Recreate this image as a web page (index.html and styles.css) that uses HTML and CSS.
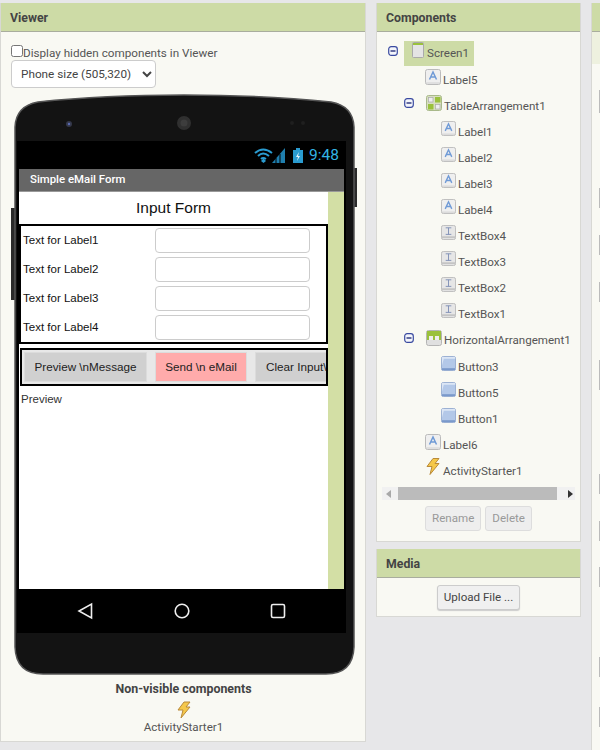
FILE: index.html
```html
<!DOCTYPE html>
<html lang="en">
<head>
    <meta charset="UTF-8">
    <title>Designer</title>
    <link rel="stylesheet" href="styles.css">
</head>
<body>

<svg class="defs">
    <symbol id="bolt" viewBox="0 0 16 18">
        <path d="M8 1 L14 1 L10 6 L14 6 L5 17 L7 9 L2 9 Z" fill="#f5c84a" stroke="#b98a3a" stroke-width="1"/>
    </symbol>
    <symbol id="ico-text" viewBox="0 0 16 16">
        <rect x="0.5" y="0.5" width="15" height="15" rx="2" fill="#e6e6e6" stroke="#bbb"/>
        <path d="M5 3 H11 M8 3 V10 M5 10 H11" fill="none" stroke="#7f8fb5" stroke-width="1"/>
        <path d="M1 13 H15" stroke="#c4c4c4" stroke-width="2"/>
    </symbol>
    <symbol id="ico-button" viewBox="0 0 16 16">
        <rect x="0.5" y="0.5" width="15" height="15" rx="2" fill="#b3c8e8" stroke="#95acd0"/>
        <path d="M1 1 H15 V3 L3 3 L1 10 Z" fill="#dce6f5"/>
        <path d="M1 14 H15" stroke="#7a99cb" stroke-width="2"/>
    </symbol>
    <symbol id="ico-label" viewBox="0 0 16 16">
        <rect x="0.5" y="0.5" width="15" height="15" rx="2" fill="#efefef" stroke="#bbb"/>
        <path d="M4.5 10.5 L8 3 L11.5 10.5 M5.5 8 H10.5" fill="none" stroke="#6f9ad6" stroke-width="1.5"/>
        <path d="M1 14 H15" stroke="#d0d0d0" stroke-width="1"/>
    </symbol>
    <symbol id="minus" viewBox="0 0 10 10">
        <rect x="0.7" y="0.7" width="8.6" height="8.6" rx="2.5" fill="#f4f6fb" stroke="#3a4aa0" stroke-width="1.2"/>
        <path d="M2.5 5 H7.5" stroke="#27327a" stroke-width="1.4"/>
    </symbol>
</svg>

<div class="panel viewer">
    <div class="panel-head">Viewer</div>
    <div class="viewer-body">
        <label class="hidden-check"><input type="checkbox">Display hidden components in Viewer</label>
        <select class="size-select">
            <option>Phone size (505,320)</option>
        </select>

        <div class="phone">
            <svg class="phone-shell" width="341" height="580" viewBox="0 0 341 580">
                <rect x="-3" y="113" width="4" height="92" fill="#2a2a2a"/>
                <rect x="340" y="73" width="3" height="39" fill="#2a2a2a"/>
                <path d="M1 32 Q2 11 24 7 Q90 0 170 0 Q250 0 317 7 Q339 11 340 32 V552 Q339 579 312 579 H29 Q2 579 1 552 Z" fill="#131313" stroke="#555" stroke-width="1.5"/>
                <circle cx="55" cy="29" r="3" fill="#34384a"/>
                <circle cx="55" cy="29" r="1.2" fill="#5a6ab0"/>
                <circle cx="170" cy="28" r="7" fill="#303030"/>
                <circle cx="170" cy="28" r="3.5" fill="#3d3d3d"/>
                <circle cx="278" cy="28" r="2" fill="#1f1f1f"/>
                <circle cx="289" cy="28" r="2" fill="#1f1f1f"/>
            </svg>

            <div class="screen">
                <div class="status-bar">
                    <svg class="status-icons" width="50" height="17" viewBox="0 0 50 17">
                        <path d="M2 6 Q10 -1 19 6 M5 9 Q10 4 16 9 M8 12 Q10 10 13 12" fill="none" stroke="#2a9bd0" stroke-width="2"/>
                        <path d="M8 14 L10.5 11.5 L13 14 L10.5 16 Z" fill="#2a9bd0"/>
                        <path d="M19 16 L32 1 V16 Z" fill="#1f7fae"/>
                        <path d="M23 16 V11 M27 16 V7" stroke="#000" stroke-width="1"/>
                        <rect x="40" y="3" width="10" height="13" fill="#2a9bd0"/>
                        <rect x="43" y="1" width="4" height="2" fill="#2a9bd0"/>
                        <path d="M46 5 L43 10 H45 L44 14 L47 9 H45 Z" fill="#e8f6fc"/>
                    </svg>
                    <span class="clock">9:48</span>
                </div>
                <div class="title-bar">Simple eMail Form</div>
                <div class="form-wrap">
                    <div class="form">
                        <div class="form-title">Input Form</div>
                        <div class="table-box">
                            <div class="table-row"><span>Text for Label1</span><input class="text-box" type="text"></div>
                            <div class="table-row"><span>Text for Label2</span><input class="text-box" type="text"></div>
                            <div class="table-row"><span>Text for Label3</span><input class="text-box" type="text"></div>
                            <div class="table-row"><span>Text for Label4</span><input class="text-box" type="text"></div>
                        </div>
                        <div class="button-box">
                            <div class="form-btn btn-preview">Preview \nMessage</div>
                            <div class="form-btn btn-send">Send \n eMail</div>
                            <div class="form-btn btn-clear">Clear Input\n</div>
                        </div>
                        <div class="preview">Preview</div>
                    </div>
                    <div class="form-strip"></div>
                </div>
                <div class="nav-bar">
                    <svg width="16" height="18" viewBox="0 0 16 18"><path d="M14.5 2 V16 L2 9 Z" fill="none" stroke="#eee" stroke-width="1.6"/></svg>
                    <svg width="16" height="16" viewBox="0 0 16 16"><circle cx="8" cy="8" r="6.8" fill="none" stroke="#eee" stroke-width="1.6"/></svg>
                    <svg width="16" height="16" viewBox="0 0 16 16"><rect x="1.5" y="1.5" width="13" height="13" rx="1.5" fill="none" stroke="#eee" stroke-width="1.6"/></svg>
                </div>
            </div>
        </div>

        <div class="non-visible">
            <div class="non-visible-title">Non-visible components</div>
            <svg class="non-visible-icon" width="16" height="18"><use href="#bolt"/></svg>
            <div>ActivityStarter1</div>
        </div>
    </div>
</div>

<div class="side-column">
    <div class="panel components">
        <div class="panel-head">Components</div>
        <div class="tree">
            <div class="tree-row depth-0">
                <svg class="toggle" width="10" height="10"><use href="#minus"/></svg>
                <div class="tree-selected">
                    <svg class="screen-icon" width="12" height="16" viewBox="0 0 12 16">
                        <rect x="0.5" y="0.5" width="11" height="15" rx="1" fill="#e4e4e4" stroke="#aaa"/>
                        <rect x="1" y="1" width="10" height="2" fill="#9ac13c"/>
                    </svg>
                    <span>Screen1</span>
                </div>
            </div>
            <div class="tree-row depth-1"><svg class="tree-icon"><use href="#ico-label"/></svg><span>Label5</span></div>
            <div class="tree-row depth-1">
                <svg class="toggle" width="10" height="10"><use href="#minus"/></svg>
                <svg class="tree-icon" viewBox="0 0 16 16">
                    <rect x="0.5" y="0.5" width="15" height="15" rx="2" fill="#d8dfc0" stroke="#a9b98a"/>
                    <rect x="2.5" y="2.5" width="4.5" height="4.5" fill="#eee" stroke="#aaa" stroke-width="0.7"/>
                    <rect x="9" y="2" width="5.5" height="5.5" fill="#9ac13c"/>
                    <rect x="2" y="9" width="5.5" height="5.5" fill="#9ac13c"/>
                    <rect x="9.5" y="9.5" width="4.5" height="4.5" fill="#eee" stroke="#aaa" stroke-width="0.7"/>
                </svg>
                <span>TableArrangement1</span>
            </div>
            <div class="tree-row depth-2"><svg class="tree-icon"><use href="#ico-label"/></svg><span>Label1</span></div>
            <div class="tree-row depth-2"><svg class="tree-icon"><use href="#ico-label"/></svg><span>Label2</span></div>
            <div class="tree-row depth-2"><svg class="tree-icon"><use href="#ico-label"/></svg><span>Label3</span></div>
            <div class="tree-row depth-2"><svg class="tree-icon"><use href="#ico-label"/></svg><span>Label4</span></div>
            <div class="tree-row depth-2"><svg class="tree-icon"><use href="#ico-text"/></svg><span>TextBox4</span></div>
            <div class="tree-row depth-2"><svg class="tree-icon"><use href="#ico-text"/></svg><span>TextBox3</span></div>
            <div class="tree-row depth-2"><svg class="tree-icon"><use href="#ico-text"/></svg><span>TextBox2</span></div>
            <div class="tree-row depth-2"><svg class="tree-icon"><use href="#ico-text"/></svg><span>TextBox1</span></div>
            <div class="tree-row depth-1 row-horizontal">
                <svg class="toggle" width="10" height="10"><use href="#minus"/></svg>
                <svg class="tree-icon" viewBox="0 0 16 16">
                    <rect x="0.5" y="0.5" width="15" height="15" rx="2" fill="#e0e0e0" stroke="#b5b5b5"/>
                    <path d="M1 1 H15 V10 H1 Z" fill="#9ac13c"/>
                    <rect x="3" y="6" width="4" height="4" fill="#eee"/>
                    <rect x="9" y="6" width="4" height="4" fill="#eee"/>
                </svg>
                <span>HorizontalArrangement1</span>
            </div>
            <div class="tree-row depth-2"><svg class="tree-icon"><use href="#ico-button"/></svg><span>Button3</span></div>
            <div class="tree-row depth-2"><svg class="tree-icon"><use href="#ico-button"/></svg><span>Button5</span></div>
            <div class="tree-row depth-2"><svg class="tree-icon"><use href="#ico-button"/></svg><span>Button1</span></div>
            <div class="tree-row depth-1"><svg class="tree-icon"><use href="#ico-label"/></svg><span>Label6</span></div>
            <div class="tree-row depth-1"><svg class="tree-icon icon-bolt"><use href="#bolt"/></svg><span>ActivityStarter1</span></div>
        </div>
        <div class="h-scroll">
            <span class="arrow arrow-left"></span>
            <div class="h-thumb"></div>
            <span class="arrow arrow-right"></span>
        </div>
        <div class="tree-buttons">
            <div class="soft-btn disabled">Rename</div>
            <div class="soft-btn disabled">Delete</div>
        </div>
    </div>

    <div class="panel media">
        <div class="panel-head">Media</div>
        <div class="media-body">
            <div class="soft-btn">Upload File ...</div>
        </div>
    </div>
</div>

<div class="panel properties">
    <div class="panel-head"></div>
    <div class="properties-band"></div>
    <div class="properties-marks">
        <i></i><i></i><i></i><i></i><i></i><i></i><i></i><i></i><i></i><i></i>
    </div>
</div>

</body>
</html>
```

FILE: styles.css
```css
html, body {
    height: 100%;
    margin: 0;
    padding: 0;
}

body {
    display: flex;
    align-items: flex-start;
    gap: 10px;
    box-sizing: border-box;
    height: 750px;
    padding-top: 3px;
    overflow: hidden;
    background-color: #e7e7e9;
    font-family: 'Roboto', sans-serif;
    font-size: 12px;
    color: #444;
}

.defs {
    display: none;
}

.panel {
    box-sizing: border-box;
    background-color: #f9f9f3;
    border-right: 1px solid #d8d8d4;
    border-bottom: 1px solid #d8d8d4;
}

.panel-head {
    box-sizing: border-box;
    height: 29px;
    line-height: 30px;
    padding-left: 9px;
    background-color: #cddba6;
    border-bottom: 1px solid #a9ad9e;
    font-weight: bold;
    font-size: 12.3px;
    color: #444;
}

/* Viewer */

.viewer {
    width: 367px;
    height: 739px;
    border-left: 1px solid #d8d8d4;
}

.viewer-body {
    padding: 10px 0 0 10px;
}

.hidden-check {
    display: flex;
    align-items: center;
    height: 18px;
    padding-top: 3px;
    box-sizing: border-box;
    font-size: 11.7px;
    color: #555;
}

.hidden-check input {
    width: 12px;
    height: 12px;
    margin: -3px 0 0 0;
}

.size-select {
    display: block;
    box-sizing: border-box;
    width: 145px;
    height: 28px;
    padding-left: 5px;
    background-color: #fff;
    border: 1px solid #ccc;
    border-radius: 4px;
    font-family: 'Roboto', sans-serif;
    font-size: 11.75px;
    color: #444;
}

.phone {
    position: relative;
    box-sizing: border-box;
    width: 341px;
    height: 580px;
    margin: 7px 0 0 3px;
    padding: 46px 0 0 3px;
}

.phone-shell {
    position: absolute;
    top: 0;
    left: 0;
    overflow: visible;
}

.screen {
    position: relative;
    width: 329px;
    height: 492px;
    background-color: #000;
}

.status-bar {
    display: flex;
    align-items: center;
    justify-content: flex-end;
    gap: 6px;
    height: 28px;
    padding-right: 7px;
    box-sizing: border-box;
}

.clock {
    font-size: 15.5px;
    color: #33b5e5;
}

.title-bar {
    box-sizing: border-box;
    height: 23px;
    line-height: 21px;
    margin: 0 2px;
    padding-left: 11px;
    background-color: #666;
    border-bottom: 1px solid #999;
    font-weight: 500;
    font-size: 11.4px;
    color: #fff;
}

.form-wrap {
    display: flex;
    height: 397px;
    margin: 0 2px;
    font-family: 'Liberation Sans', sans-serif;
    color: #111;
}

.form {
    width: 309px;
    background-color: #fff;
}

.form-strip {
    width: 16px;
    background-color: #d3dfa5;
}

.form-title {
    height: 32px;
    line-height: 32px;
    text-align: center;
    font-size: 15.5px;
}

.table-box {
    box-sizing: border-box;
    height: 120px;
    padding-left: 2px;
    border: 2px solid #000;
}

.table-row {
    display: flex;
    align-items: center;
    height: 29px;
    font-size: 11.5px;
}

.table-row span {
    width: 132px;
    margin-top: -2px;
}

.text-box {
    box-sizing: border-box;
    width: 155px;
    height: 25px;
    background-color: #fff;
    border: 1px solid #ccc;
    border-radius: 4px;
}

.button-box {
    display: flex;
    gap: 8px;
    box-sizing: border-box;
    height: 38px;
    margin: 4px 0 0 1px;
    padding: 2px 0 2px 2px;
    border: 2px solid #000;
    overflow: hidden;
    background-color: #e8e8e8;
}

.form-btn {
    flex: none;
    box-sizing: border-box;
    height: 30px;
    line-height: 28px;
    text-align: center;
    border: 1px solid #dcdcdc;
    background-color: #d0d0d0;
    font-size: 11.7px;
    color: #222;
}

.btn-preview {
    width: 123px;
}

.btn-send {
    width: 92px;
    background-color: #ffabab;
}

.btn-clear {
    width: 90px;
    text-align: left;
    padding-left: 10px;
}

.preview {
    margin: 7px 0 0 2px;
    font-size: 11.5px;
    color: #333;
}

.nav-bar {
    display: flex;
    align-items: center;
    justify-content: space-between;
    height: 44px;
    padding: 0 60px;
}

.non-visible {
    display: flex;
    flex-direction: column;
    align-items: center;
    width: 345px;
    margin-top: 6px;
    font-size: 11.6px;
    color: #555;
}

.non-visible-title {
    font-weight: bold;
    font-size: 12.4px;
    color: #444;
}

.non-visible-icon {
    margin: 5px 0 1px;
}

/* Components */

.side-column {
    display: flex;
    flex-direction: column;
    gap: 7px;
    width: 205px;
    flex: none;
}

.components {
    height: 539px;
    border-left: 1px solid #d8d8d4;
}

.tree {
    padding-top: 8px;
    font-size: 11.6px;
    color: #555;
}

.tree-row {
    display: flex;
    align-items: center;
    gap: 2px;
    height: 26px;
}

.tree-row > span {
    margin-top: 1px;
}

.depth-0 {
    padding-left: 11px;
    gap: 6px;
}

.depth-1 {
    padding-left: 48px;
}

.depth-2 {
    padding-left: 64px;
}

.row-horizontal {
    margin-top: 1px;
}

.row-horizontal > span {
    margin-top: 0;
}

.toggle {
    flex: none;
    margin-top: -4px;
}

.depth-1 .toggle {
    margin-left: -21px;
    margin-right: 10px;
}

.tree-selected {
    display: flex;
    align-items: center;
    gap: 3px;
    box-sizing: border-box;
    width: 70px;
    height: 25px;
    padding-left: 8px;
    background-color: #cddba6;
}

.screen-icon {
    margin-top: -6px;
}

.tree-icon {
    flex: none;
    width: 16px;
    height: 16px;
    margin-top: -5px;
}

.depth-2 .tree-icon {
    width: 15px;
    height: 15px;
}

.tree-icon.icon-bolt {
    height: 19px;
    margin-top: -7px;
}

.h-scroll {
    display: flex;
    align-items: center;
    box-sizing: border-box;
    width: 193px;
    height: 13px;
    margin: 4px 0 0 5px;
    background-color: #f1f1f1;
}

.h-thumb {
    width: 159px;
    height: 13px;
    margin: 0 6px 0 7px;
    background-color: #bbb;
}

.arrow {
    width: 0;
    height: 0;
    margin-left: 4px;
    border-top: 4px solid transparent;
    border-bottom: 4px solid transparent;
}

.arrow-left {
    border-right: 5px solid #a8a8a8;
}

.arrow-right {
    margin-left: 5px;
    border-left: 5px solid #333;
}

.tree-buttons {
    display: flex;
    justify-content: center;
    gap: 4px;
    margin-top: 6px;
}

.soft-btn {
    box-sizing: border-box;
    height: 25px;
    line-height: 23px;
    padding: 0 6px;
    background-color: #f0f0f0;
    border: 1px solid #ccc;
    border-radius: 3px;
    font-size: 11.6px;
    color: #444;
    box-shadow: 0 1px 1px #ccc;
}

.soft-btn.disabled {
    color: #999;
    background-color: #eee;
    border-color: #ddd;
    box-shadow: none;
}

/* Media */

.media {
    height: 68px;
    border-left: 1px solid #d8d8d4;
}

.media-body {
    display: flex;
    justify-content: center;
    padding-top: 7px;
}

/* Properties, cut off by the window */

.properties {
    flex: none;
    width: 9px;
    height: 747px;
    border: 0;
    border-left: 1px solid #d8d8d4;
}

.properties-band {
    height: 32px;
    background-color: #eef1df;
}

.properties-marks {
    display: flex;
    flex-direction: column;
    align-items: flex-end;
}

.properties-marks i {
    display: block;
    width: 1px;
    height: 20px;
    margin-top: 27px;
    background-color: #bbb;
}

.properties-marks i:nth-child(1) {
    margin-top: 26px;
    height: 23px;
}

.properties-marks i:nth-child(2) {
    margin-top: 75px;
}

.properties-marks i:nth-child(5) {
    margin-top: 58px;
    height: 30px;
}

.properties-marks i:nth-child(6) {
    margin-top: 84px;
}

.properties-marks i:nth-child(8) {
    margin-top: 26px;
}

.properties-marks i:nth-child(9) {
    margin-top: 70px;
}

.properties-marks i:nth-child(10) {
    margin-top: 30px;
}
```
